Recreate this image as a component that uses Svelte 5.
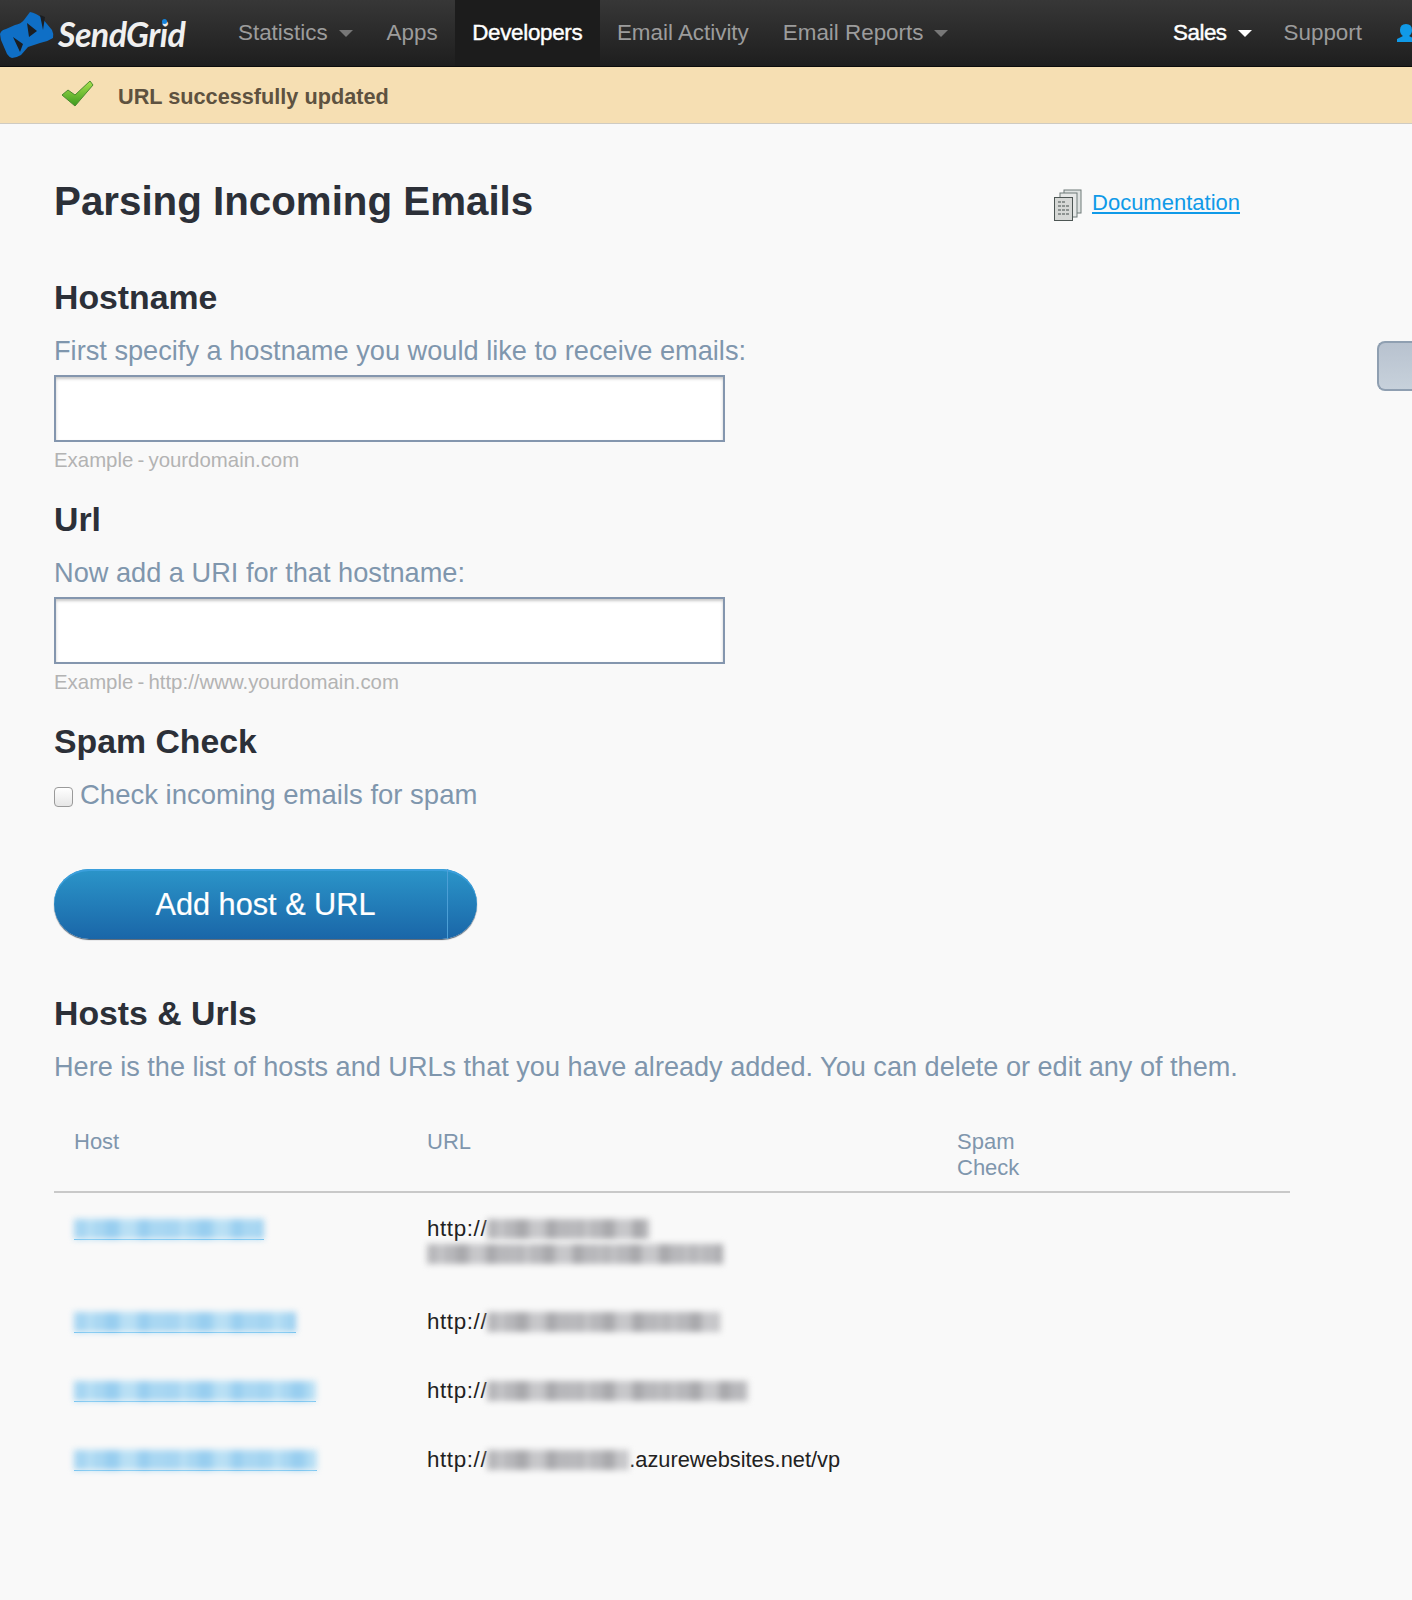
<script>
  const nav = [
    { label: 'Statistics', caret: true },
    { label: 'Apps' },
    { label: 'Developers', active: true },
    { label: 'Email Activity' },
    { label: 'Email Reports', caret: true }
  ];
  const rows = [
    { host: 190, pad: 'tall', url: [{ w: 162, t: 'http://' }, { w: 296 }] },
    { host: 222, url: [{ w: 233, t: 'http://' }] },
    { host: 242, url: [{ w: 261, t: 'http://' }] },
    { host: 243, url: [{ w: 142, t: 'http://', tail: '.azurewebsites.net/vp' }] }
  ];
</script>

<header class="nav">
  <div class="logo">
    <svg width="54" height="56" viewBox="0 0 54 56" aria-hidden="true">
      <path fill="#0f6fc6" d="M0 29 Q1 25 6 24 L15 20 Q21 19 24 15 L30 7 Q36 8 42 13 L52 25 Q54 29 53 33 Q47 37 40 38 L28 42 L21 50 Q16 53 12 53 Q9 52 7 49 L1 35 Z" />
      <path fill="#1b1e22" d="M40 10 L45 12 L43 25 Z M27 18 L37 26 L29 32 Z M13 32 L23 39 L20 47 Z" />
    </svg>
    <span class="brand">SendGrid</span>
    <i class="dot"></i>
  </div>
  <nav class="links">
    {#each nav as item}
      <a class="link" class:active={item.active} href="#top">
        {item.label}
        {#if item.caret}<i class="caret"></i>{/if}
      </a>
    {/each}
  </nav>
  <div class="right">
    <a class="link sales" href="#top">Sales <i class="caret white"></i></a>
    <a class="link" href="#top">Support</a>
    <svg class="user" width="20" height="20" viewBox="0 0 20 20" aria-hidden="true">
      <path fill="#109ae8" d="M9 1 Q15 1 15 7 Q15 11 12 13 L18 16 L18 19 L0 19 L0 16 L6 13 Q3 11 3 7 Q3 1 9 1 Z" />
    </svg>
  </div>
</header>

<div class="banner">
  <svg width="36" height="30" viewBox="0 0 36 30" aria-hidden="true">
    <defs>
      <linearGradient id="tick" x1="0" y1="0" x2="0" y2="1">
        <stop offset="0" stop-color="#a9e24e" />
        <stop offset="1" stop-color="#3c9a1e" />
      </linearGradient>
    </defs>
    <path fill="url(#tick)" stroke="#4b8a30" stroke-width="1" stroke-linejoin="round" d="M3 15 L9 10 L16 15 L31 1 L34 5 L16 26 Z" />
  </svg>
  <strong>URL successfully updated</strong>
</div>

<div class="side-tab"></div>

<main class="page">
  <div class="title-row">
    <h1>Parsing Incoming Emails</h1>
    <div class="doc">
      <svg width="30" height="34" viewBox="0 0 30 34" aria-hidden="true">
        <rect x="11" y="1" width="17" height="23" fill="#dfe3e2" stroke="#6f7a78" />
        <rect x="7" y="4" width="17" height="24" fill="#e6e8e7" stroke="#6f7a78" />
        <rect x="1.500" y="8.500" width="18" height="23" fill="#d6d8d6" stroke="#4d5654" />
        <path stroke="#767c7b" stroke-width="1.500" stroke-dasharray="3 1" d="M5 13 H13 M5 17 H16 M5 21 H16 M5 25 H16" fill="none" />
      </svg>
      <a href="#top">Documentation</a>
    </div>
  </div>

  <section class="field">
    <h2>Hostname</h2>
    <p class="lead">First specify a hostname you would like to receive emails:</p>
    <div class="input"></div>
    <p class="hint">Example - yourdomain.com</p>
  </section>

  <section class="field">
    <h2>Url</h2>
    <p class="lead">Now add a URI for that hostname:</p>
    <div class="input"></div>
    <p class="hint">Example - http://www.yourdomain.com</p>
  </section>

  <section class="field">
    <h2>Spam Check</h2>
    <label class="check"><span class="box"></span><span>Check incoming emails for spam</span></label>
  </section>

  <button class="cta"><span>Add host &amp; URL</span></button>

  <section class="hosts">
    <h2>Hosts &amp; Urls</h2>
    <p class="lead wide">Here is the list of hosts and URLs that you have already added. You can delete or edit any of them.</p>
    <div class="table">
      <div class="thead">
        <div class="c1">Host</div>
        <div class="c2">URL</div>
        <div class="c3">Spam<br />Check</div>
      </div>
      {#each rows as row}
        <div class="row" class:tall={row.pad}>
          <div class="c1"><span class="under"><span class="smear blue" style="width:{row.host}px"></span></span></div>
          <div class="c2">
            {#each row.url as line}
              <div class="line">
                {#if line.t}<span class="proto">{line.t}</span>{/if}<span class="smear grey" style="width:{line.w}px"></span>{#if line.tail}<span class="tail">{line.tail}</span>{/if}
              </div>
            {/each}
          </div>
        </div>
      {/each}
    </div>
  </section>
</main>

<style>
  :global(body) {
    margin: 0;
    background: #f9f9f9;
    font-family: "Liberation Sans", Arial, sans-serif;
  }
  .nav {
    height: 67px;
    box-sizing: border-box;
    display: flex;
    align-items: stretch;
    background: linear-gradient(#373737, #1e1e1e);
    border-bottom: 1px solid #0c0c0c;
    overflow: hidden;
  }
  .logo {
    position: relative;
    width: 221px;
    display: flex;
    align-items: center;
    flex: none;
  }
  .brand {
    margin-left: 4px;
    color: #f0f0f0;
    font: italic 700 34px Lato, "Liberation Sans", sans-serif;
    letter-spacing: -0.6px;
  }
  .dot {
    position: absolute;
    left: 162px;
    top: 19px;
    width: 5px;
    height: 5px;
    border-radius: 50%;
    background: #1583dc;
  }
  .links, .right {
    display: flex;
    align-items: stretch;
  }
  .right {
    margin-left: auto;
    margin-right: -5px;
  }
  .link {
    display: flex;
    align-items: center;
    gap: 11px;
    padding: 0 17px;
    color: #9c9c9c;
    font-size: 22.4px;
    text-decoration: none;
    white-space: nowrap;
  }
  .link.active {
    padding: 0 17.5px;
    background: #1c1c1c;
    color: #fff;
    letter-spacing: -0.3px;
    -webkit-text-stroke: 0.4px #fff;
  }
  .link.sales {
    padding-right: 15px;
    color: #fff;
    letter-spacing: -0.5px;
    -webkit-text-stroke: 0.4px #fff;
  }
  .caret {
    width: 0;
    height: 0;
    border-left: 7px solid transparent;
    border-right: 7px solid transparent;
    border-top: 7px solid #777;
  }
  .caret.white { border-top-color: #fff; }
  .user {
    align-self: center;
    margin-left: 18px;
  }
  .banner {
    height: 57px;
    box-sizing: border-box;
    display: flex;
    align-items: center;
    padding-left: 59px;
    gap: 23px;
    background: #f6dfb3;
    border-bottom: 1px solid #cfcbc2;
    color: #5e5240;
    font-size: 21.7px;
  }
  .banner strong { margin-top: 4px; }
  .side-tab {
    position: absolute;
    left: 1377px;
    top: 341px;
    width: 35px;
    height: 50px;
    box-sizing: border-box;
    background: linear-gradient(#b8c2cf, #c7d1db);
    border: 2px solid #8f9fb1;
    border-right: 0;
    border-radius: 8px 0 0 8px;
  }
  .page {
    width: 1236px;
    padding-left: 54px;
    overflow: hidden;
  }
  .title-row {
    display: flex;
    justify-content: space-between;
    padding-top: 54px;
    height: 99px;
  }
  h1 {
    margin: 0;
    font-size: 40.3px;
    line-height: 48px;
    color: #2c3038;
  }
  .doc {
    flex: none;
    display: flex;
    gap: 9px;
    align-items: flex-start;
    margin-right: 50px;
    padding-top: 10px;
  }
  .doc svg { margin-top: 1px; }
  .doc a {
    color: #109ae8;
    font-size: 22px;
    line-height: 30px;
  }
  .field { margin-bottom: 27px; }
  h2 {
    margin: 0;
    font-size: 33.8px;
    line-height: 40px;
    color: #2c3038;
  }
  .lead {
    margin: 18px 0 0;
    font-size: 27.2px;
    line-height: 32px;
    color: #7f96ad;
  }
  .lead.wide { font-size: 27.1px; }
  .input {
    width: 671px;
    height: 67px;
    box-sizing: border-box;
    margin-top: 8px;
    background: #fff;
    border: 2px solid #8496ae;
    box-shadow: inset 0 2px 3px rgba(0,0,0,.22);
  }
  .hint {
    margin: 6px 0 0;
    font-size: 20.4px;
    line-height: 24px;
    word-spacing: -1.5px;
    color: #b3b3b3;
  }
  .check {
    display: flex;
    align-items: center;
    gap: 7px;
    margin-top: 18px;
    font-size: 27.5px;
    line-height: 32px;
    color: #7f96ad;
  }
  .box {
    width: 19px;
    height: 20px;
    margin-top: 4px;
    box-sizing: border-box;
    background: linear-gradient(#fff, #e6e6e6);
    border: 1px solid #9a9a9a;
    border-radius: 4px;
  }
  .cta {
    display: block;
    position: relative;
    width: 423px;
    height: 70px;
    margin-top: 58px;
    padding: 1px 0 0;
    border: 0;
    border-radius: 35px;
    background: linear-gradient(#2b95c9, #1a66a8);
    box-shadow: inset 0 2px 0 #3b9fdc, 0 1px 1px #4f5f6f;
    color: #fff;
    font: 30.7px "Liberation Sans", sans-serif;
    -webkit-text-stroke: 0.2px #fff;
  }
  .cta::after {
    content: "";
    position: absolute;
    top: 0;
    bottom: 0;
    right: 29px;
    width: 1px;
    background: #4c9fd6;
  }
  .hosts { margin-top: 54px; }
  .table {
    margin-top: 46px;
    width: 1236px;
    font-size: 22px;
    line-height: 26px;
  }
  .thead {
    display: flex;
    color: #7f96ad;
    border-bottom: 2px solid #c9c9c9;
    padding-bottom: 10px;
  }
  .c1 { width: 373px; padding-left: 20px; box-sizing: border-box; flex: none; }
  .c2 { width: 530px; flex: none; }
  .row {
    display: flex;
    height: 69px;
    color: #222;
    font-size: 22.4px;
    padding-top: 23px;
    box-sizing: border-box;
  }
  .row .c1 { padding-top: 3px; }
  .row.tall { height: 93px; }
  .line { display: flex; align-items: center; height: 25px; }
  .proto { letter-spacing: 0.6px; }
  .tail { font-size: 21.8px; }
  .under {
    display: inline-block;
    line-height: 0;
    border-bottom: 1px solid #6cc0f0;
  }
  .smear {
    display: inline-block;
    height: 20px;
    filter: blur(3px);
  }
  .smear.grey {
    background-color: #bcbcbf;
    background-image:
      repeating-linear-gradient(90deg, rgba(90,90,95,.12) 0 11px, rgba(255,255,255,.06) 11px 29px),
      repeating-linear-gradient(90deg, rgba(255,255,255,.12) 0 17px, rgba(70,70,75,.07) 17px 43px);
  }
  .smear.blue {
    background-color: #a9d8f2;
    background-image:
      repeating-linear-gradient(90deg, rgba(60,150,225,.1) 0 13px, rgba(255,255,255,.08) 13px 31px),
      repeating-linear-gradient(90deg, rgba(255,255,255,.12) 0 19px, rgba(60,150,225,.06) 19px 47px);
  }
</style>
